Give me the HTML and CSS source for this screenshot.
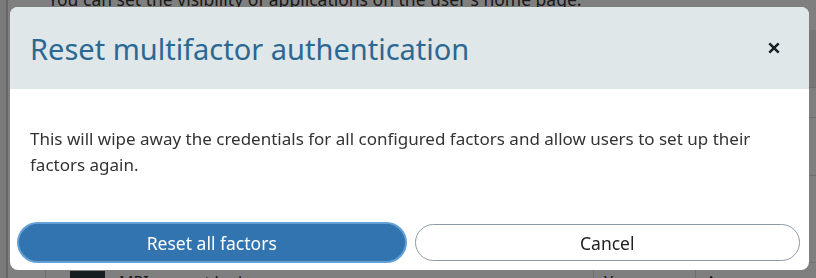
FILE: index.html
```html
<!DOCTYPE html>
<html lang="en">
<head>
<meta charset="utf-8">
<title>Reset multifactor authentication</title>
<link rel="stylesheet" href="styles.css">
</head>
<body>
<div class="page">
  <div class="rail"></div>
  <main class="main">
    <p class="intro">You can set the visibility of applications on the user's home page.</p>
    <table class="apps">
      <thead>
        <tr><th class="c1">Application</th><th class="c2">Visible</th><th class="c3">Category</th></tr>
      </thead>
      <tbody>
        <tr class="r1"><td>All applications</td><td>Yes</td><td>22</td></tr>
        <tr class="r2"><td>Documents</td><td>Yes</td><td>Office<br>tools</td></tr>
        <tr class="r3"><td>Calendar</td><td>No</td><td>Office</td></tr>
        <tr class="r4"><td><span class="thumb"></span>MPI request login</td><td>Yes</td><td>Apps</td></tr>
      </tbody>
    </table>
  </main>
</div>

<div class="overlay">
  <div class="modal" role="dialog" aria-labelledby="mtitle">
    <header class="modal-head">
      <h1 id="mtitle" class="modal-title">Reset multifactor authentication</h1>
      <button class="close" aria-label="Close">
        <svg width="12" height="12" viewBox="0 0 12 12"><path d="M1.3 1.3 L10.7 10.7 M10.7 1.3 L1.3 10.7" stroke="#17212b" stroke-width="2.5" fill="none"/></svg>
      </button>
    </header>
    <div class="modal-body">
      <p>This will wipe away the credentials for all configured factors and allow users to set up their factors again.</p>
    </div>
    <footer class="modal-foot">
      <button class="btn btn-primary">Reset all factors</button>
      <button class="btn btn-secondary">Cancel</button>
    </footer>
  </div>
</div>
</body>
</html>
```

FILE: styles.css
```css
html, body {
  margin: 0;
  padding: 0;
  background: #ffffff;
  font-family: "Noto Sans", "Open Sans", sans-serif;
  color: #333333;
  overflow: hidden;
  height: 278px;
}

.page {
  display: flex;
  height: 278px;
  overflow: hidden;
}

.rail {
  width: 6px;
  background: #f4f4f4;
  border-right: 2px solid #cccccc;
  flex: none;
}

.main {
  padding-left: 37px;
  flex: 1;
  min-width: 0;
}

.intro {
  margin: -13px 0 19px 3px;
  font-size: 17.5px;
  line-height: 24px;
  color: #333333;
  white-space: nowrap;
}

.apps {
  border-collapse: collapse;
  width: 900px;
  font-size: 16px;
  color: #333333;
}

.apps th, .apps td {
  text-align: left;
  padding: 0 10px;
  border-bottom: 1px solid #dddddd;
  border-left: 1px solid #dddddd;
  vertical-align: middle;
  white-space: nowrap;
}

.apps th {
  background: #ececec;
  height: 57px;
  font-weight: 600;
}

.apps .c1 { width: 527px; }
.apps .c2 { width: 81px; }

.r1 td { height: 29px; }
.r2 td { height: 57px; line-height: 18px; }
.r3 td { height: 86px; }
.r4 td { height: 60px; vertical-align: top; padding-top: 8px; }

.thumb {
  display: inline-block;
  width: 35px;
  height: 35px;
  background: #2a3a40;
  margin: 0 14px 0 14px;
  vertical-align: top;
}

.overlay {
  position: fixed;
  inset: 0;
  background: rgba(0, 0, 0, 0.5);
  padding: 7px 7px 8px 10px;
  box-sizing: border-box;
}

.modal {
  height: 100%;
  background: #ffffff;
  border-radius: 8px;
  overflow: hidden;
  display: flex;
  flex-direction: column;
}

.modal-head {
  height: 82px;
  flex: none;
  background: #dfe7e8;
  display: flex;
  align-items: center;
  justify-content: space-between;
  padding: 0 29px 0 20px;
}

.modal-title {
  margin: 0;
  font-size: 29px;
  font-weight: 400;
  color: #2b6893;
}

.close {
  border: 0;
  background: transparent;
  padding: 0;
  width: 12px;
  height: 12px;
  display: flex;
  cursor: pointer;
}

.modal-body {
  flex: 1;
  padding: 37px 21px 0 20px;
}

.modal-body p {
  margin: 0;
  font-size: 17px;
  line-height: 26px;
  color: #333333;
}

.modal-foot {
  display: flex;
  gap: 10px;
  padding: 0 9px 9px 9px;
}

.btn {
  flex: 1;
  height: 37px;
  border-radius: 19px;
  font-family: "Noto Sans", "Open Sans", sans-serif;
  font-size: 17.5px;
  cursor: pointer;
}

.btn-primary {
  background: #3174b0;
  color: #ffffff;
  border: 1px solid #3174b0;
  box-shadow: 0 0 0 2px #63a0d6;
}

.btn-secondary {
  background: #ffffff;
  color: #222222;
  border: 1px solid #8d9ba7;
}
```
